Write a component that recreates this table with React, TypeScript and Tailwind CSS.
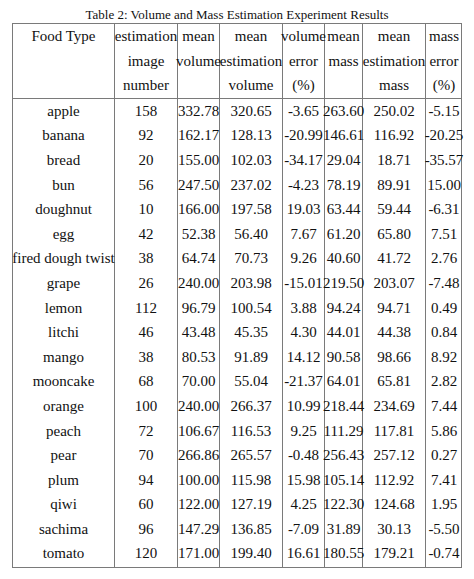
const rows: string[][] = [
  ["apple", "158", "332.78", "320.65", "-3.65", "263.60", "250.02", "-5.15"],
  ["banana", "92", "162.17", "128.13", "-20.99", "146.61", "116.92", "-20.25"],
  ["bread", "20", "155.00", "102.03", "-34.17", "29.04", "18.71", "-35.57"],
  ["bun", "56", "247.50", "237.02", "-4.23", "78.19", "89.91", "15.00"],
  ["doughnut", "10", "166.00", "197.58", "19.03", "63.44", "59.44", "-6.31"],
  ["egg", "42", "52.38", "56.40", "7.67", "61.20", "65.80", "7.51"],
  ["fired dough twist", "38", "64.74", "70.73", "9.26", "40.60", "41.72", "2.76"],
  ["grape", "26", "240.00", "203.98", "-15.01", "219.50", "203.07", "-7.48"],
  ["lemon", "112", "96.79", "100.54", "3.88", "94.24", "94.71", "0.49"],
  ["litchi", "46", "43.48", "45.35", "4.30", "44.01", "44.38", "0.84"],
  ["mango", "38", "80.53", "91.89", "14.12", "90.58", "98.66", "8.92"],
  ["mooncake", "68", "70.00", "55.04", "-21.37", "64.01", "65.81", "2.82"],
  ["orange", "100", "240.00", "266.37", "10.99", "218.44", "234.69", "7.44"],
  ["peach", "72", "106.67", "116.53", "9.25", "111.29", "117.81", "5.86"],
  ["pear", "70", "266.86", "265.57", "-0.48", "256.43", "257.12", "0.27"],
  ["plum", "94", "100.00", "115.98", "15.98", "105.14", "112.92", "7.41"],
  ["qiwi", "60", "122.00", "127.19", "4.25", "122.30", "124.68", "1.95"],
  ["sachima", "96", "147.29", "136.85", "-7.09", "31.89", "30.13", "-5.50"],
  ["tomato", "120", "171.00", "199.40", "16.61", "180.55", "179.21", "-0.74"],
];

const headers: string[][] = [
  ["Food Type"],
  ["estimation", "image", "number"],
  ["mean", "volume"],
  ["mean", "estimation", "volume"],
  ["volume", "error", "(%)"],
  ["mean", "mass"],
  ["mean", "estimation", "mass"],
  ["mass", "error", "(%)"],
];

const cols = "grid grid-cols-[102px_63px_42px_63px_42px_38px_63px_36px]";

const Line = ({ text }: { text: string }) => (
  <div className="flex justify-center whitespace-nowrap h-[24.6px] leading-[24.6px]">
    <span>{text}</span>
  </div>
);

export default function App() {
  return (
    <div className="w-[474px] h-[579px] bg-white text-[#111] pt-[7px] font-['Liberation_Serif','DejaVu_Serif',serif]">
      <div className="text-center text-[13px] leading-[16px]">
        Table 2: Volume and Mass Estimation Experiment Results
      </div>
      <div className="ml-[12px] w-[450px] border border-[#7a7a7a] text-[15px]">
        <div className={`${cols} border-b border-[#7a7a7a]`}>
          {headers.map((h, i) => (
            <div key={i} className={`h-[73.8px] ${i < 7 ? "border-r border-[#7a7a7a]" : ""}`}>
              {h.map((t, j) => (
                <Line key={j} text={t} />
              ))}
            </div>
          ))}
        </div>
        <div className={cols}>
          {headers.map((_, i) => (
            <div key={i} className={`pb-[1px] ${i < 7 ? "border-r border-[#7a7a7a]" : ""}`}>
              {rows.map((r) => (
                <Line key={r[0]} text={r[i]} />
              ))}
            </div>
          ))}
        </div>
      </div>
    </div>
  );
}
